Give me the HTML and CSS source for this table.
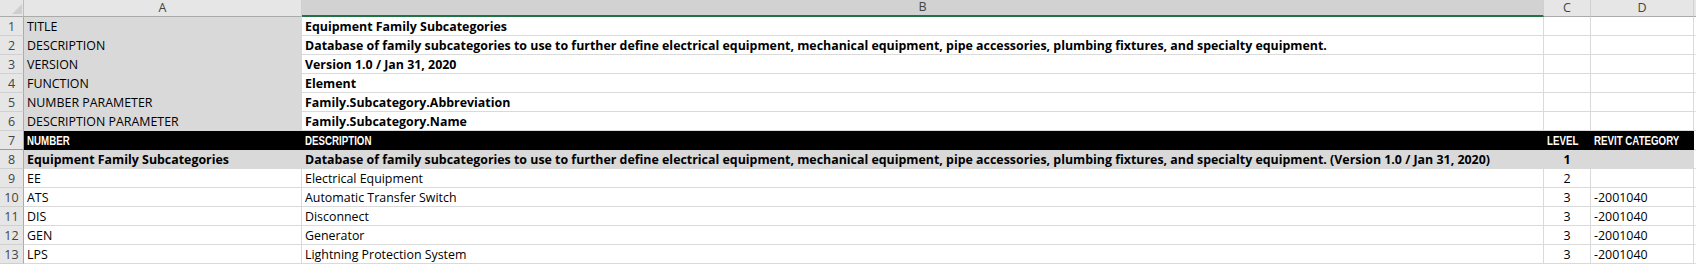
FILE: index.html
```html
<!DOCTYPE html>
<html>
<head>
<meta charset="utf-8">
<link rel="stylesheet" href="styles.css">
</head>
<body>
<div class="sheet">
  <div class="corner"><span class="tri"></span></div>
  <div class="colhead">A</div>
  <div class="colhead sel">B</div>
  <div class="colhead">C</div>
  <div class="colhead">D</div>
  <div class="rest head"></div>

  <div class="rn">1</div><div class="c meta">TITLE</div><div class="c b">Equipment Family Subcategories</div><div class="c"></div><div class="c"></div><div class="rest"></div>
  <div class="rn">2</div><div class="c meta">DESCRIPTION</div><div class="c b">Database of family subcategories to use to further define electrical equipment, mechanical equipment, pipe accessories, plumbing fixtures, and specialty equipment.</div><div class="c"></div><div class="c"></div><div class="rest"></div>
  <div class="rn">3</div><div class="c meta">VERSION</div><div class="c b">Version 1.0 / Jan 31, 2020</div><div class="c"></div><div class="c"></div><div class="rest"></div>
  <div class="rn">4</div><div class="c meta">FUNCTION</div><div class="c b">Element</div><div class="c"></div><div class="c"></div><div class="rest"></div>
  <div class="rn">5</div><div class="c meta">NUMBER PARAMETER</div><div class="c b">Family.Subcategory.Abbreviation</div><div class="c"></div><div class="c"></div><div class="rest"></div>
  <div class="rn">6</div><div class="c meta">DESCRIPTION PARAMETER</div><div class="c b">Family.Subcategory.Name</div><div class="c"></div><div class="c"></div><div class="rest"></div>

  <div class="rn r7">7</div><div class="c hd"><span>NUMBER</span></div><div class="c hd"><span>DESCRIPTION</span></div><div class="c hd"><span>LEVEL</span></div><div class="c hd"><span>REVIT CATEGORY</span></div><div class="rest"></div>

  <div class="rn">8</div><div class="c grp b">Equipment Family Subcategories</div><div class="c grp b">Database of family subcategories to use to further define electrical equipment, mechanical equipment, pipe accessories, plumbing fixtures, and specialty equipment. (Version 1.0 / Jan 31, 2020)</div><div class="c grp b ctr">1</div><div class="c grp"></div><div class="rest"></div>
  <div class="rn">9</div><div class="c">EE</div><div class="c">Electrical Equipment</div><div class="c ctr">2</div><div class="c"></div><div class="rest"></div>
  <div class="rn">10</div><div class="c">ATS</div><div class="c">Automatic Transfer Switch</div><div class="c ctr">3</div><div class="c">-2001040</div><div class="rest"></div>
  <div class="rn">11</div><div class="c">DIS</div><div class="c">Disconnect</div><div class="c ctr">3</div><div class="c">-2001040</div><div class="rest"></div>
  <div class="rn">12</div><div class="c">GEN</div><div class="c">Generator</div><div class="c ctr">3</div><div class="c">-2001040</div><div class="rest"></div>
  <div class="rn">13</div><div class="c">LPS</div><div class="c">Lightning Protection System</div><div class="c ctr">3</div><div class="c">-2001040</div><div class="rest"></div>
</div>
</body>
</html>
```
FILE: styles.css
```css
html, body {
  margin: 0;
  padding: 0;
  background: #ffffff;
}
.sheet {
  display: grid;
  grid-template-columns: 24px 278px 1242px 47px 103px 2px;
  grid-template-rows: 17px repeat(13, 19px);
  width: 1696px;
  font-family: "Open Sans", "Noto Sans", sans-serif;
  font-size: 12.4px;
  color: #000;
}
.corner {
  background: #e6e6e6;
  border-right: 1px solid #bdbdbd;
  border-bottom: 1px solid #ababab;
  position: relative;
}
.tri {
  position: absolute;
  right: 1px;
  bottom: 2px;
  width: 0;
  height: 0;
  border-left: 10px solid transparent;
  border-bottom: 10px solid #cfcfcf;
}
.colhead {
  background: #e6e6e6;
  border-right: 1px solid #d0d0d0;
  border-bottom: 1px solid #ababab;
  display: flex;
  align-items: center;
  justify-content: center;
  color: #444;
  font-size: 12.5px;
  line-height: 1;
}
.colhead.sel {
  background: #d2d2d2;
  border-bottom: 2px solid #217346;
}
.rest {
  border-bottom: 1px solid #e1e1e1;
}
.rest.head {
  background: #e6e6e6;
  border-bottom: 1px solid #ababab;
}
.rn {
  background: #e6e6e6;
  border-right: 1px solid #ababab;
  border-bottom: 1px solid #d0d0d0;
  color: #444;
  display: flex;
  align-items: flex-end;
  justify-content: center;
  font-size: 12.5px;
}
.rn.r7 {
  border-bottom: 1px solid #9a9a9a;
}
.c {
  border-right: 1px solid #dadada;
  border-bottom: 1px solid #dadada;
  padding-left: 3px;
  display: flex;
  align-items: flex-end;
  white-space: nowrap;
  overflow: visible;
}
.meta {
  background: #d9d9d9;
  border-right-color: #d9d9d9;
  border-bottom-color: #d9d9d9;
}
.b {
  font-weight: 700;
}
.hd {
  background: #000;
  color: #fff;
  font-family: "Liberation Sans", Arial, sans-serif;
  font-weight: 700;
  font-size: 12px;
  border-right-color: #000;
  border-bottom-color: #000;
  align-items: center;
  padding-top: 1px;
}
.hd span {
  display: inline-block;
  transform: scaleX(0.81);
  transform-origin: left center;
}
.grp {
  background: #d9d9d9;
  border-right-color: #d9d9d9;
  border-bottom-color: #d9d9d9;
}
.ctr {
  justify-content: center;
  padding-left: 0;
}
```
